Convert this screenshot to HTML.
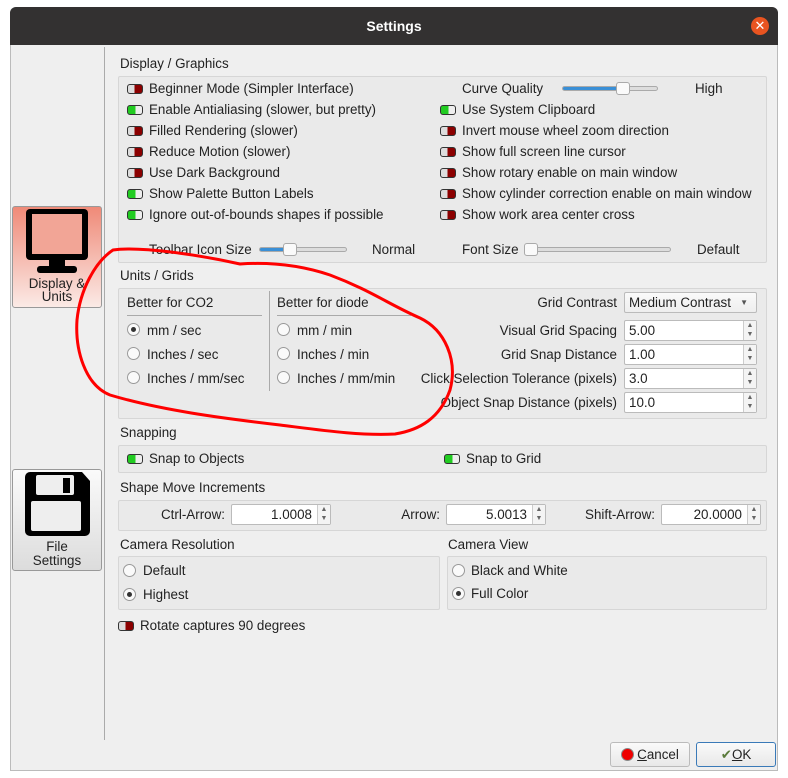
<!DOCTYPE html>
<html><head><meta charset="utf-8"><style>
*{box-sizing:border-box;margin:0;padding:0}
body{width:788px;height:778px;background:#fff;font-family:"Liberation Sans","DejaVu Sans",sans-serif;font-size:13.4px;color:#222;position:relative;overflow:hidden}
.a{position:absolute;white-space:nowrap}
.win{position:absolute;left:10px;top:7px;width:768px;height:764px;background:#efefef;border:1px solid #bbb;border-top:none;border-radius:6px 6px 0 0}
.title{position:absolute;left:10px;top:7px;width:768px;height:38px;background:#333131;border-radius:6px 6px 0 0;color:#fff;font-weight:bold;font-size:14px;text-align:center;line-height:38px}
.box{position:absolute;border:1px solid #d6d6d6;background:#eaeaea;border-radius:2px}
.t{position:absolute;width:16px;height:10px;border:1.5px solid #333;border-radius:3px}
.t.off{background:linear-gradient(90deg,#ddd 0 45%,#8b0000 45%)}
.t.on{background:linear-gradient(90deg,#2c2 0 55%,#eee 55%)}
.r{position:absolute;width:13px;height:13px;border:1px solid #999;border-radius:50%;background:#fafafa}
.r.s::after{content:"";position:absolute;left:3px;top:3px;width:5px;height:5px;border-radius:50%;background:#333}
.in{position:absolute;height:21px;background:#fff;border:1px solid #bbb;border-radius:2px;padding:0 4px;line-height:19px}
.in .sp{position:absolute;right:0;top:0;width:13px;height:19px;border-left:1px solid #ccc;background:#f4f4f4;font-size:7px;line-height:9px;text-align:center;color:#666}
.sl{position:absolute;height:5px;border:1px solid #aaa;border-radius:3px;background:#ddd}
.h{position:absolute;width:14px;height:13px;background:#fafafa;border:1px solid #aaa;border-radius:3px}
.btn{position:absolute;height:25px;border:1px solid #bbb;border-radius:3px;background:linear-gradient(#fafafa,#e8e8e8);text-align:center;line-height:23px}
</style></head><body>
<div class="win"></div>
<div class="title">Settings</div>
<div class="a" style="left:751px;top:17px;width:18px;height:18px;border-radius:50%;background:#e95420;color:#fff;font-size:13px;text-align:center;line-height:18px">✕</div>
<div class="a" style="left:104px;top:47px;width:1px;height:693px;background:#aaa"></div>

<!-- sidebar -->
<div class="a" style="left:12px;top:206px;width:90px;height:102px;border:1px solid #999;border-radius:3px;background:linear-gradient(#ef8a78,#fbeae6)"></div>
<svg class="a" style="left:24px;top:209px" width="66" height="66" viewBox="0 0 66 66"><rect x="2" y="0" width="62" height="51" rx="4" fill="#000"/><rect x="8" y="5" width="50" height="40" fill="#f2a596"/><rect x="25" y="50" width="16" height="8" fill="#000"/><rect x="13" y="57" width="40" height="7" rx="3" fill="#000"/></svg>
<div class="a" style="left:12px;top:277px;width:90px;text-align:center;line-height:13px">Display &amp;<br>Units</div>
<div class="a" style="left:12px;top:469px;width:90px;height:102px;border:1px solid #999;border-radius:3px;background:linear-gradient(#fafafa,#dcdcdc)"></div>
<svg class="a" style="left:24px;top:471px" width="66" height="66" viewBox="0 0 66 66"><path d="M6 1h52l8 9v50a5 5 0 0 1-5 5H6a5 5 0 0 1-5-5V6a5 5 0 0 1 5-5z" fill="#000"/><rect x="12" y="4" width="38" height="20" rx="2" fill="#eee"/><rect x="39" y="7" width="7" height="15" fill="#000"/><rect x="7" y="30" width="50" height="30" rx="2" fill="#eee"/></svg>
<div class="a" style="left:12px;top:540px;width:90px;text-align:center;line-height:14px">File<br>Settings</div>

<!-- Display / Graphics -->
<div class="a" style="left:120px;top:56px">Display / Graphics</div>
<div class="box" style="left:118px;top:76px;width:649px;height:187px"></div>
<div class="t off" style="left:127px;top:84px"></div><div class="a" style="left:149px;top:81px">Beginner Mode (Simpler Interface)</div>
<div class="t on" style="left:127px;top:105px"></div><div class="a" style="left:149px;top:102px">Enable Antialiasing (slower, but pretty)</div>
<div class="t off" style="left:127px;top:126px"></div><div class="a" style="left:149px;top:123px">Filled Rendering (slower)</div>
<div class="t off" style="left:127px;top:147px"></div><div class="a" style="left:149px;top:144px">Reduce Motion (slower)</div>
<div class="t off" style="left:127px;top:168px"></div><div class="a" style="left:149px;top:165px">Use Dark Background</div>
<div class="t on" style="left:127px;top:189px"></div><div class="a" style="left:149px;top:186px">Show Palette Button Labels</div>
<div class="t on" style="left:127px;top:210px"></div><div class="a" style="left:149px;top:207px">Ignore out-of-bounds shapes if possible</div>

<div class="a" style="left:462px;top:81px">Curve Quality</div>
<div class="sl" style="left:562px;top:86px;width:96px;background:linear-gradient(90deg,#3a8fd6 0 62%,#ddd 62%)"></div><div class="h" style="left:616px;top:82px"></div>
<div class="a" style="left:695px;top:81px">High</div>
<div class="t on" style="left:440px;top:105px"></div><div class="a" style="left:462px;top:102px">Use System Clipboard</div>
<div class="t off" style="left:440px;top:126px"></div><div class="a" style="left:462px;top:123px">Invert mouse wheel zoom direction</div>
<div class="t off" style="left:440px;top:147px"></div><div class="a" style="left:462px;top:144px">Show full screen line cursor</div>
<div class="t off" style="left:440px;top:168px"></div><div class="a" style="left:462px;top:165px">Show rotary enable on main window</div>
<div class="t off" style="left:440px;top:189px"></div><div class="a" style="left:462px;top:186px">Show cylinder correction enable on main window</div>
<div class="t off" style="left:440px;top:210px"></div><div class="a" style="left:462px;top:207px">Show work area center cross</div>

<div class="a" style="left:149px;top:242px">Toolbar Icon Size</div>
<div class="sl" style="left:259px;top:247px;width:88px;background:linear-gradient(90deg,#3a8fd6 0 33%,#ddd 33%)"></div><div class="h" style="left:283px;top:243px"></div>
<div class="a" style="left:372px;top:242px">Normal</div>
<div class="a" style="left:462px;top:242px">Font Size</div>
<div class="sl" style="left:525px;top:247px;width:146px"></div><div class="h" style="left:524px;top:243px"></div>
<div class="a" style="left:697px;top:242px">Default</div>

<!-- Units / Grids -->
<div class="a" style="left:120px;top:268px">Units / Grids</div>
<div class="box" style="left:118px;top:288px;width:649px;height:131px"></div>
<div class="a" style="left:127px;top:295px">Better for CO2</div>
<div class="a" style="left:127px;top:315px;width:135px;height:1px;background:#aaa"></div>
<div class="a" style="left:269px;top:291px;width:1px;height:100px;background:#aaa"></div>
<div class="a" style="left:277px;top:295px">Better for diode</div>
<div class="a" style="left:277px;top:315px;width:134px;height:1px;background:#aaa"></div>
<div class="r s" style="left:127px;top:323px"></div><div class="a" style="left:147px;top:323px">mm / sec</div>
<div class="r" style="left:127px;top:347px"></div><div class="a" style="left:147px;top:347px">Inches / sec</div>
<div class="r" style="left:127px;top:371px"></div><div class="a" style="left:147px;top:371px">Inches / mm/sec</div>
<div class="r" style="left:277px;top:323px"></div><div class="a" style="left:297px;top:323px">mm / min</div>
<div class="r" style="left:277px;top:347px"></div><div class="a" style="left:297px;top:347px">Inches / min</div>
<div class="r" style="left:277px;top:371px"></div><div class="a" style="left:297px;top:371px">Inches / mm/min</div>

<div class="a" style="right:171px;top:295px">Grid Contrast</div>
<div class="in" style="left:624px;top:292px;width:133px;background:linear-gradient(#fafafa,#eee)">Medium Contrast<span style="position:absolute;right:8px;top:0;font-size:8px;color:#555">▼</span></div>
<div class="a" style="right:171px;top:323px">Visual Grid Spacing</div>
<div class="in" style="left:624px;top:320px;width:133px">5.00<div class="sp">▲<br>▼</div></div>
<div class="a" style="right:171px;top:347px">Grid Snap Distance</div>
<div class="in" style="left:624px;top:344px;width:133px">1.00<div class="sp">▲<br>▼</div></div>
<div class="a" style="right:171px;top:371px">Click Selection Tolerance (pixels)</div>
<div class="in" style="left:624px;top:368px;width:133px">3.0<div class="sp">▲<br>▼</div></div>
<div class="a" style="right:171px;top:395px">Object Snap Distance (pixels)</div>
<div class="in" style="left:624px;top:392px;width:133px">10.0<div class="sp">▲<br>▼</div></div>

<!-- Snapping -->
<div class="a" style="left:120px;top:425px">Snapping</div>
<div class="box" style="left:118px;top:445px;width:649px;height:28px"></div>
<div class="t on" style="left:127px;top:454px"></div><div class="a" style="left:149px;top:451px">Snap to Objects</div>
<div class="t on" style="left:444px;top:454px"></div><div class="a" style="left:466px;top:451px">Snap to Grid</div>

<!-- Shape move -->
<div class="a" style="left:120px;top:480px">Shape Move Increments</div>
<div class="box" style="left:118px;top:500px;width:649px;height:31px"></div>
<div class="a" style="right:563px;top:507px">Ctrl-Arrow:</div>
<div class="in" style="left:231px;top:504px;width:100px;text-align:right;padding-right:18px">1.0008<div class="sp">▲<br>▼</div></div>
<div class="a" style="right:348px;top:507px">Arrow:</div>
<div class="in" style="left:446px;top:504px;width:100px;text-align:right;padding-right:18px">5.0013<div class="sp">▲<br>▼</div></div>
<div class="a" style="right:133px;top:507px">Shift-Arrow:</div>
<div class="in" style="left:661px;top:504px;width:100px;text-align:right;padding-right:18px">20.0000<div class="sp">▲<br>▼</div></div>

<!-- Camera -->
<div class="a" style="left:120px;top:537px">Camera Resolution</div>
<div class="box" style="left:118px;top:556px;width:322px;height:54px"></div>
<div class="r" style="left:123px;top:564px"></div><div class="a" style="left:143px;top:563px">Default</div>
<div class="r s" style="left:123px;top:588px"></div><div class="a" style="left:143px;top:587px">Highest</div>
<div class="a" style="left:448px;top:537px">Camera View</div>
<div class="box" style="left:447px;top:556px;width:320px;height:54px"></div>
<div class="r" style="left:452px;top:564px"></div><div class="a" style="left:471px;top:563px">Black and White</div>
<div class="r s" style="left:452px;top:587px"></div><div class="a" style="left:471px;top:586px">Full Color</div>

<div class="t off" style="left:118px;top:621px"></div><div class="a" style="left:140px;top:618px">Rotate captures 90 degrees</div>

<!-- buttons -->
<div class="btn" style="left:610px;top:742px;width:80px"><span style="display:inline-block;width:13px;height:13px;border-radius:50%;background:#e00;border:1px solid #888;vertical-align:-2px;margin-right:3px"></span><u>C</u>ancel</div>
<div class="btn" style="left:696px;top:742px;width:80px;border-color:#3a7ab8"><span style="color:#5a7a3a;font-weight:bold">✔</span><u>O</u>K</div>

<!-- red annotation -->
<svg class="a" style="left:0;top:0" width="788" height="778"><path d="M113 250 C140 246 200 255 240 264 C270 262 300 265 330 275 C370 290 390 305 420 318 C445 330 458 360 450 390 C440 418 420 430 395 434 C360 436 320 430 280 425 C220 418 160 410 110 395 C85 385 75 350 77 320 C80 290 95 262 113 250 Z" fill="none" stroke="#f00" stroke-width="3"/></svg>
</body></html>
